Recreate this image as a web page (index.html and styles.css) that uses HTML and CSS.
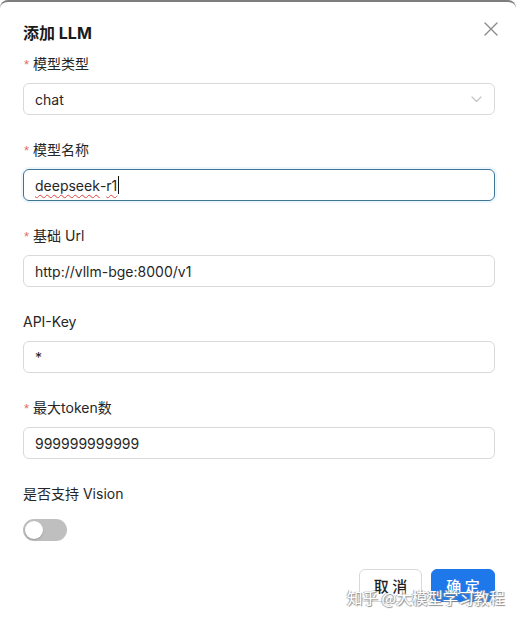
FILE: index.html
```html
<!DOCTYPE html>
<html lang="zh-CN">
<head>
  <meta charset="UTF-8" />
  <meta name="viewport" content="width=device-width, initial-scale=1.0"/>
  <title>添加 LLM</title>
  <link rel="stylesheet" href="styles.css">
</head>
<body>
  <div class="dialog">
    <div class="header">
      <h2 class="title">添加 LLM</h2>
      <button class="close" aria-label="关闭">
        <svg width="14" height="14" viewBox="0 0 14 14" fill="none">
          <path d="M1 1L13 13M13 1L1 13" stroke="#8c8c8c" stroke-width="1.4" stroke-linecap="round"/>
        </svg>
      </button>
    </div>

    <div class="form">
      <div class="item">
        <label class="label required">模型类型</label>
        <div class="input select">
          <span>chat</span>
          <svg class="chevron" width="11" height="7" viewBox="0 0 11 7" fill="none">
            <path d="M1 1L5.5 5.5L10 1" stroke="#c4c4c4" stroke-width="1.2" stroke-linecap="round" stroke-linejoin="round"/>
          </svg>
        </div>
      </div>

      <div class="item">
        <label class="label required">模型名称</label>
        <div class="input focused">
          <span class="typo">deepseek</span><span>-</span><span class="typo">r1</span><span class="caret"></span>
        </div>
      </div>

      <div class="item">
        <label class="label required">基础 Url</label>
        <div class="input"><span>http://vllm-bge:8000/v1</span></div>
      </div>

      <div class="item">
        <label class="label">API-Key</label>
        <div class="input"><span>*</span></div>
      </div>

      <div class="item">
        <label class="label required">最大token数</label>
        <div class="input"><span>999999999999</span></div>
      </div>

      <div class="item">
        <label class="label">是否支持 Vision</label>
        <div class="control">
          <span class="switch"><span class="knob"></span></span>
        </div>
      </div>
    </div>

    <div class="footer">
      <button class="btn">取 消</button>
      <button class="btn primary">确 定</button>
    </div>

    <div class="watermark">知乎 @大模型学习教程</div>
  </div>
</body>
</html>
```

FILE: styles.css
```css
body {
  margin: 0;
  background-color: #fff;
  font-family: Inter, "Noto Sans CJK SC", sans-serif;
  color: #262626;
  overflow: hidden;
}

.dialog {
  position: relative;
  box-sizing: border-box;
  height: 619px;
  overflow: hidden;
  border-top: 2px solid #7d7d7d;
  border-radius: 8px 8px 0 0;
  padding: 19px 21px 0 23px;
}

.header {
  display: flex;
  justify-content: space-between;
  align-items: center;
  height: 24px;
  margin-bottom: 8px;
}

.title {
  margin: 0;
  font-size: 16px;
  font-weight: 700;
  line-height: 24px;
  color: #1a1a1a;
}

.close {
  border: 0;
  background: none;
  padding: 0;
  width: 14px;
  height: 14px;
  margin-right: -3px;
  margin-top: -8px;
  display: flex;
}

.item {
  margin-bottom: 24px;
}

.label {
  display: flex;
  align-items: center;
  height: 22px;
  font-size: 14px;
  line-height: 22px;
  margin-bottom: 8px;
  color: #262626;
}

.label.required::before {
  content: "*";
  color: #e0706b;
  margin: 0 4px 0 1px;
  font-family: "Liberation Sans", sans-serif;
  font-size: 13px;
  line-height: 1;
}

.input {
  display: flex;
  align-items: center;
  height: 32px;
  box-sizing: border-box;
  border: 1px solid #d9d9d9;
  border-radius: 6px;
  padding: 0 11px;
  font-size: 14px;
  color: #262626;
}

.select {
  justify-content: space-between;
}

.chevron {
  margin-right: 1px;
}

.focused {
  border-color: #3e7597;
  box-shadow: 0 0 0 2px rgba(5, 145, 255, 0.08);
}

.typo {
  text-decoration: underline wavy #e0443e;
  text-decoration-thickness: 1px;
  text-underline-offset: 3px;
}

.caret {
  width: 1px;
  height: 18px;
  background: #111;
  margin-left: 1px;
}

.control {
  height: 32px;
  display: flex;
  align-items: center;
  padding-top: 1px;
  box-sizing: border-box;
}

.switch {
  display: inline-block;
  position: relative;
  width: 44px;
  height: 22px;
  border-radius: 11px;
  background: #bfbfbf;
}

.knob {
  position: absolute;
  top: 2px;
  left: 2px;
  width: 18px;
  height: 18px;
  border-radius: 50%;
  background: #fff;
  box-shadow: 0 1px 2px rgba(0, 0, 0, 0.2);
}

.footer {
  display: flex;
  justify-content: flex-end;
  gap: 9px;
}

.btn {
  height: 33px;
  width: 63px;
  border: 1px solid #d9d9d9;
  border-radius: 6px;
  background: #fff;
  font-family: "Noto Sans CJK SC", sans-serif;
  font-size: 15px;
  font-weight: 500;
  color: #1f1f1f;
}

.btn.primary {
  width: 64px;
  background: #1f78ea;
  border-color: #1f78ea;
  color: #fff;
}

.watermark {
  position: absolute;
  left: 347px;
  top: 584px;
  font-family: "Noto Sans CJK SC", sans-serif;
  font-size: 15.5px;
  color: #fff;
  text-shadow: 1px 1px 1px #8a8a8a, -1px 0 1px #9a9a9a;
  white-space: nowrap;
}
```
